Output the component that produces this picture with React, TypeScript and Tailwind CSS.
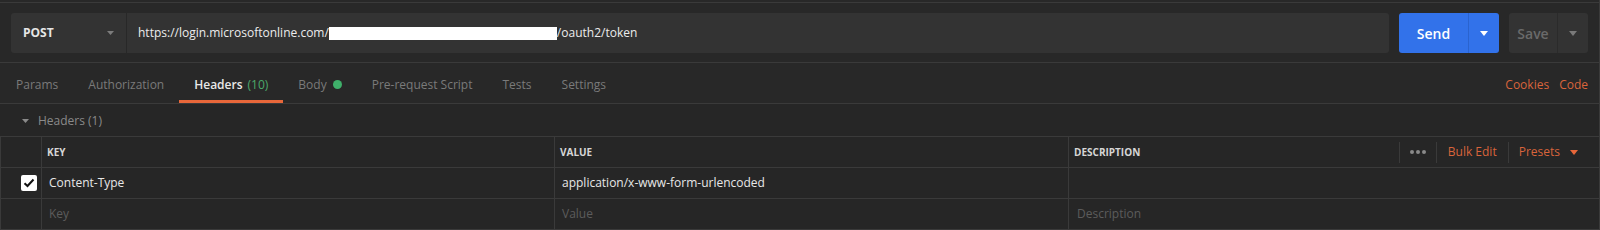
import React from "react";

const Tri = ({ color = "#8a8a8a", w = 8, h = 4 }: { color?: string; w?: number; h?: number }) => (
  <svg width={w} height={h} viewBox={`0 0 ${w} ${h}`}>
    <polygon points={`0,0 ${w},0 ${w / 2},${h}`} fill={color} />
  </svg>
);

const tabs: { label: string; extra?: React.ReactNode; active?: boolean }[] = [
  { label: "Params" },
  { label: "Authorization" },
  { label: "Headers", extra: <span className="ml-[5px] font-normal text-[#4ca86a]">(10)</span>, active: true },
  { label: "Body", extra: <span className="ml-[6px] inline-block h-[9px] w-[9px] rounded-full bg-[#3fb06a]" /> },
  { label: "Pre-request Script" },
  { label: "Tests" },
  { label: "Settings" },
];

export default function App() {
  return (
    <div className="flex h-[230px] w-[1600px] flex-col overflow-hidden border-r border-[#3a3a3a] bg-[#282828] font-['Open_Sans',sans-serif] text-[12px]">
      <div className="h-[3px] shrink-0 border-b border-[#3a3a3a]" />
      {/* URL bar */}
      <div className="flex h-[60px] shrink-0 items-start border-b border-[#3a3a3a] pl-[11px] pr-[11px] pt-[10px]">
        <div className="flex h-[40px] w-[115px] items-center justify-between rounded-l-[3px] bg-[#333333] pl-[12px] pr-[12px]">
          <span className="text-[12px] font-bold text-[#e6e6e6]">POST</span>
          <Tri w={7} h={4} color="#7c7c7c" />
        </div>
        <div className="ml-px flex h-[40px] flex-1 items-center rounded-r-[3px] bg-[#333333] pl-[11px] text-[12px] text-[#ececec]">
          <span>https://login.microsoftonline.com/</span>
          <span className="inline-block h-[13px] w-[228px] bg-white" />
          <span>/oauth2/token</span>
        </div>
        <div className="ml-[10px] flex h-[40px] w-[100px] overflow-hidden rounded-[3px] bg-[#3272ea]">
          <div className="flex flex-1 items-center justify-center border-r border-[#2a63cf] text-[14px] font-semibold text-white">Send</div>
          <div className="flex w-[30px] items-center justify-center">
            <Tri w={8} h={5} color="#ffffff" />
          </div>
        </div>
        <div className="ml-[10px] flex h-[40px] w-[79px] overflow-hidden rounded-[3px] bg-[#333333]">
          <div className="flex flex-1 items-center justify-center border-r border-[#2b2b2b] text-[14px] font-semibold text-[#6a6a6a]">Save</div>
          <div className="flex w-[30px] items-center justify-center">
            <Tri w={8} h={5} color="#7a7a7a" />
          </div>
        </div>
      </div>
      {/* Tabs */}
      <div className="flex h-[41px] shrink-0 items-stretch border-b border-[#3a3a3a] pl-px pr-[11px]">
        {tabs.map((t) => (
          <div
            key={t.label}
            className={
              "flex items-center border-b-[3px] px-[15px] pt-[6px] " +
              (t.active ? "border-[#e8673a] font-semibold text-[#e8e8e8]" : "border-transparent text-[#7a7a7a]")
            }
          >
            <span>{t.label}</span>
            {t.extra}
          </div>
        ))}
        <div className="flex-1" />
        <div className="flex items-center gap-[10px] pt-[3px] text-[#d9643b]">
          <span>Cookies</span>
          <span>Code</span>
        </div>
      </div>
      {/* Headers (1) */}
      <div className="flex h-[33px] shrink-0 items-center border-b border-[#3a3a3a] bg-[#262626] pl-[22px] pt-[1px]">
        <Tri w={7} h={4} color="#8a8a8a" />
        <span className="ml-[9px] text-[#8a8a8a]">Headers (1)</span>
      </div>
      {/* Table */}
      <div className="flex flex-1 flex-col border-l border-[#3a3a3a] bg-[#262626]">
        <div className="grid h-[31px] shrink-0 grid-cols-[41px_513px_514px_1fr] border-b border-[#3a3a3a]">
          <div className="border-r border-[#3a3a3a]" />
          <div className="flex items-center border-r border-[#3a3a3a] pl-[5px] text-[10px] font-bold text-[#d6d6d6]">KEY</div>
          <div className="flex items-center border-r border-[#3a3a3a] pl-[5px] text-[10px] font-bold text-[#d6d6d6]">VALUE</div>
          <div className="flex items-center pl-[5px] text-[10px] font-bold text-[#d6d6d6]">
            <span>DESCRIPTION</span>
            <div className="flex-1" />
            <div className="h-[21px] w-px bg-[#3a3a3a]" />
            <div className="flex items-center gap-[2px] px-[10px]">
              <span className="h-[4px] w-[4px] rounded-full bg-[#8a8a8a]" />
              <span className="h-[4px] w-[4px] rounded-full bg-[#8a8a8a]" />
              <span className="h-[4px] w-[4px] rounded-full bg-[#8a8a8a]" />
            </div>
            <div className="h-[21px] w-px bg-[#3a3a3a]" />
            <span className="px-[11px] text-[12px] font-normal text-[#d9643b]">Bulk Edit</span>
            <div className="h-[21px] w-px bg-[#3a3a3a]" />
            <span className="pl-[10px] text-[12px] font-normal text-[#d9643b]">Presets</span>
            <span className="ml-[10px] mr-[21px]">
              <Tri w={8} h={5} color="#e8673a" />
            </span>
          </div>
        </div>
        <div className="grid h-[31px] shrink-0 grid-cols-[41px_513px_514px_1fr] border-b border-[#3a3a3a]">
          <div className="flex items-center border-r border-[#3a3a3a] pl-[20px]">
            <div className="flex h-[16px] w-[16px] items-center justify-center rounded-[2px] bg-white">
              <svg width="12" height="10" viewBox="0 0 12 10">
                <path d="M1.5 5.2 L4.5 8 L10.5 1.5" fill="none" stroke="#111" strokeWidth="2" />
              </svg>
            </div>
          </div>
          <div className="flex items-center border-r border-[#3a3a3a] pl-[7px] text-[#e8e8e8]">Content-Type</div>
          <div className="flex items-center border-r border-[#3a3a3a] pl-[7px] text-[#e8e8e8]">application/x-www-form-urlencoded</div>
          <div />
        </div>
        <div className="grid h-[31px] shrink-0 grid-cols-[41px_513px_514px_1fr] border-b border-[#3a3a3a]">
          <div className="border-r border-[#3a3a3a]" />
          <div className="flex items-center border-r border-[#3a3a3a] pl-[7px] text-[#5c5c5c]">Key</div>
          <div className="flex items-center border-r border-[#3a3a3a] pl-[7px] text-[#5c5c5c]">Value</div>
          <div className="flex items-center pl-[8px] text-[#5c5c5c]">Description</div>
        </div>
      </div>
    </div>
  );
}
